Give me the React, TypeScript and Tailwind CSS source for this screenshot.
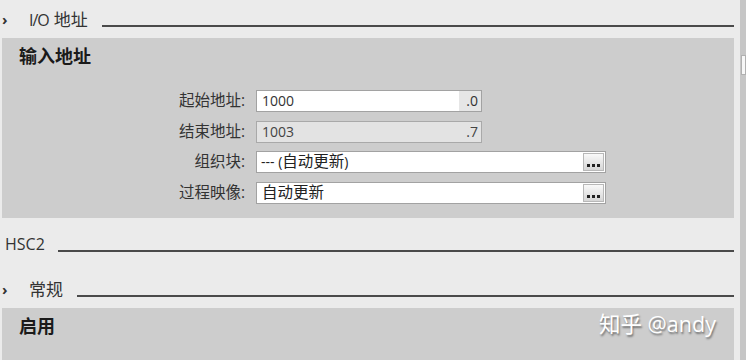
const font = "font-['Open_Sans','Noto_Sans_CJK_SC',sans-serif]";

function Chevron() {
  return (
    <span className="w-[29px] pl-[2px] text-[15px] font-bold leading-none text-[#333]">›</span>
  );
}

function SectionHeader({
  children,
  chevron,
  height,
  lineGap,
}: {
  children: React.ReactNode;
  chevron?: boolean;
  height: string;
  lineGap: string;
}) {
  return (
    <div className={`flex items-center ${height}`}>
      {chevron ? <Chevron /> : <span className="w-[5px]" />}
      <span className="leading-none text-[#333]">{children}</span>
      <div className={`flex-1 h-[2px] bg-[#4a4a4a] mt-[13px] ${lineGap}`} />
    </div>
  );
}

function EllipsisButton() {
  return (
    <div className="w-[21px] self-stretch m-[1px] flex items-end justify-center gap-[2px] pb-[3px] bg-gradient-to-b from-[#f9f9f9] to-[#d6d6d6] border border-[#b8b8b8]">
      <span className="w-[3px] h-[3px] bg-[#222]" />
      <span className="w-[3px] h-[3px] bg-[#222]" />
      <span className="w-[3px] h-[3px] bg-[#222]" />
    </div>
  );
}

function FormRow({ label, children }: { label: string; children: React.ReactNode }) {
  return (
    <div className="flex items-center h-[22px]">
      <span className="w-[256px] pr-[11px] text-right text-[15.5px] text-[#333]">{label}</span>
      {children}
    </div>
  );
}

export default function App() {
  return (
    <div className={`w-[746px] h-[360px] bg-[#ebebeb] flex overflow-hidden relative ${font}`}>
      <div className="w-[734px] flex flex-col">
        <SectionHeader chevron height="h-[38px]" lineGap="ml-[14px]">
          <span className="text-[16px] tracking-[-1px]">I/O</span>
          <span className="ml-[5px] text-[17px]">地址</span>
        </SectionHeader>

        <div className="ml-[2px] bg-[#cdcdcd] pt-[7px] pb-[14px] h-[180px]">
          <div className="pl-[17px] text-[18px] font-bold leading-[22px] text-[#1a1a1a]">输入地址</div>
          <div className="mt-[23px] flex flex-col gap-[8.5px] -ml-[2px]">
            <FormRow label="起始地址:">
              <div className="flex w-[226px] h-[22px] border border-[#a2a2a2] bg-white">
                <span className="flex-1 pl-[5px] text-[14px] leading-[20px] text-[#333]">1000</span>
                <span className="w-[22px] bg-[#e6e6e6] text-right pr-[3px] text-[14px] leading-[20px] text-[#333]">.0</span>
              </div>
            </FormRow>
            <FormRow label="结束地址:">
              <div className="flex w-[226px] h-[22px] border border-[#a9a9a9] bg-[#e3e3e3]">
                <span className="flex-1 pl-[5px] text-[14px] leading-[20px] text-[#444]">1003</span>
                <span className="w-[22px] text-right pr-[3px] text-[14px] leading-[20px] text-[#444]">.7</span>
              </div>
            </FormRow>
            <FormRow label="组织块:">
              <div className="flex w-[350px] h-[22px] border border-[#a2a2a2] bg-white">
                <span className="flex-1 pl-[4px] text-[14px] leading-[19px] text-[#222]">
                  --- (<span className="text-[15.5px]">自动更新</span>)
                </span>
                <EllipsisButton />
              </div>
            </FormRow>
            <FormRow label="过程映像:">
              <div className="flex w-[350px] h-[22px] border border-[#a2a2a2] bg-white">
                <span className="flex-1 pl-[5px] text-[15.5px] leading-[19px] text-[#222]">自动更新</span>
                <EllipsisButton />
              </div>
            </FormRow>
          </div>
        </div>

        <SectionHeader height="h-[52px]" lineGap="ml-[13px]">
          <span className="text-[16px]">HSC2</span>
        </SectionHeader>
        <SectionHeader chevron height="h-[38px]" lineGap="ml-[14px]">
          <span className="text-[17px]">常规</span>
        </SectionHeader>

        <div className="ml-[2px] flex-1 bg-[#cdcdcd] pt-[7px]">
          <div className="pl-[17px] text-[18px] font-bold leading-[22px] text-[#1a1a1a]">启用</div>
        </div>
      </div>

      <div className="ml-[6px] w-[6px] h-full bg-[#c6c6c6] flex flex-col">
        <div className="mt-[55px] ml-[1px] h-[20px] bg-[#f7f7f7] border border-[#b0b0b0]" />
      </div>

      <div className="absolute left-[599px] top-[308px] text-[21.5px] text-white [text-shadow:1px_2px_2px_rgba(0,0,0,0.45)]">
        知乎 @andy
      </div>
    </div>
  );
}
